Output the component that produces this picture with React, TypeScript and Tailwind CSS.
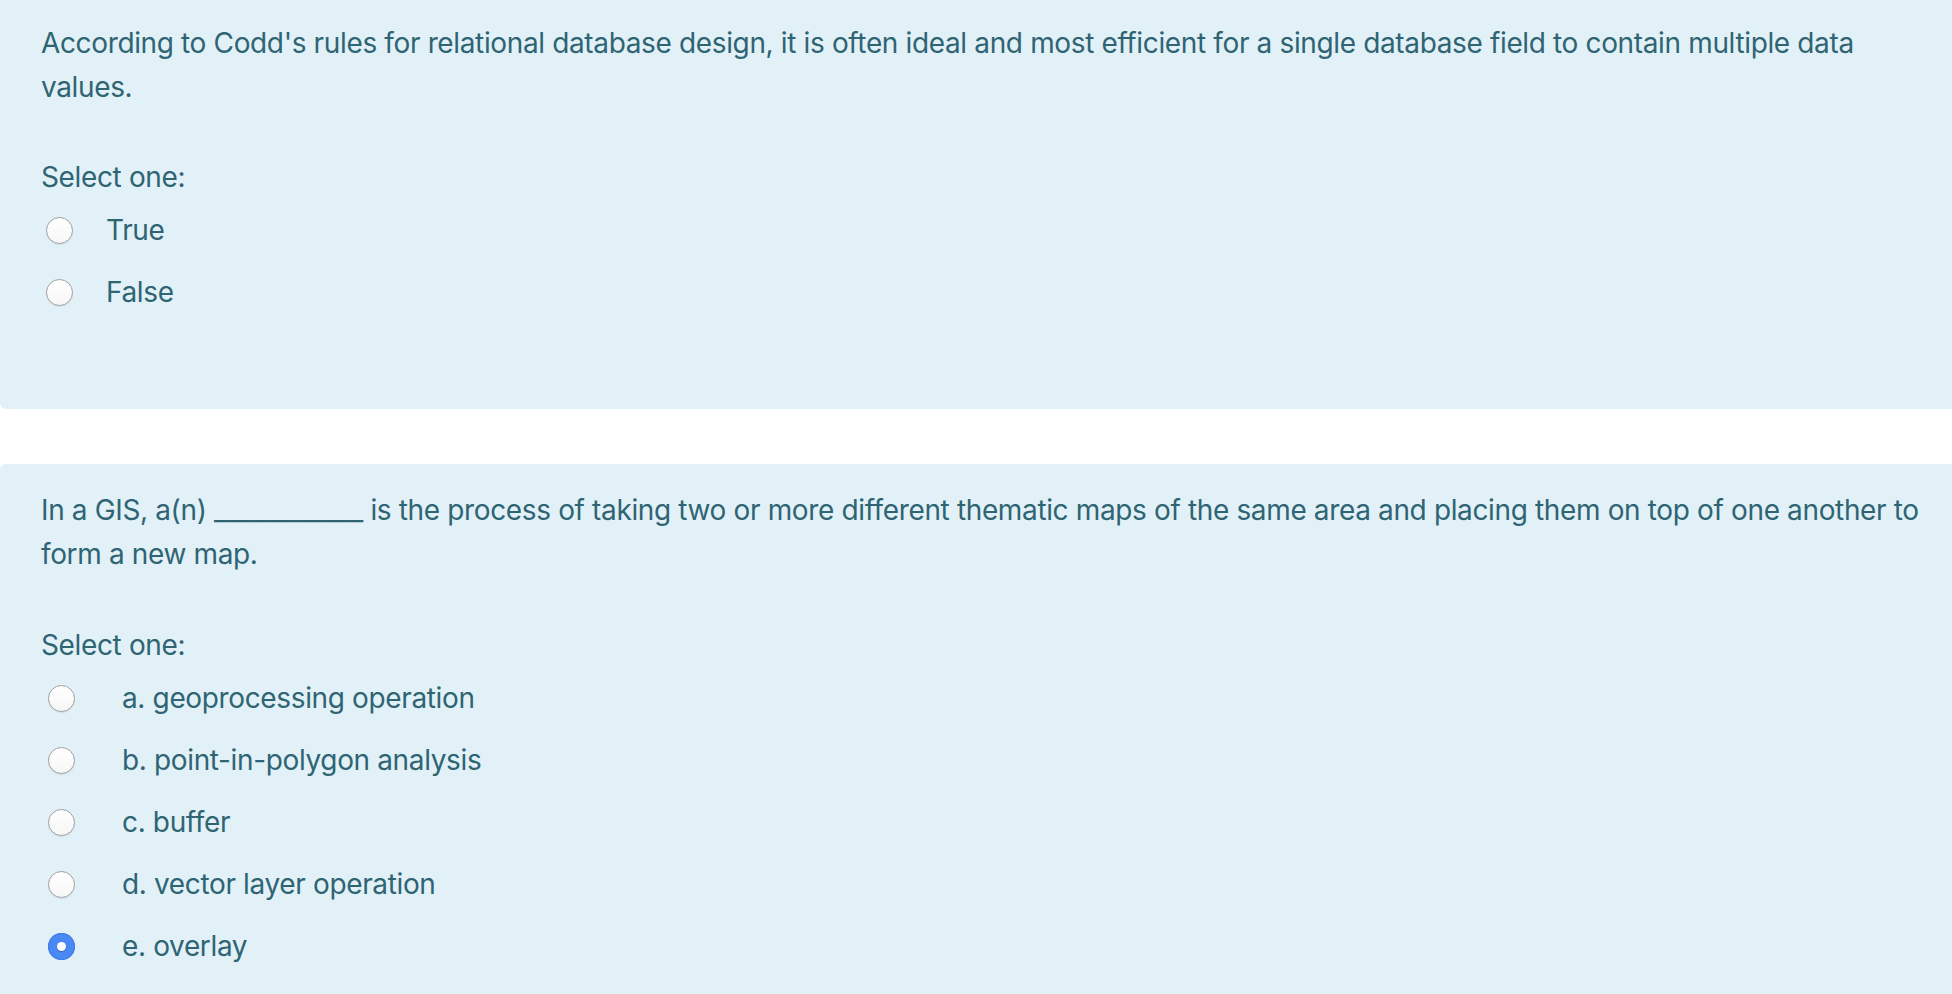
import React from "react";

function Radio({ checked = false }: { checked?: boolean }) {
  if (checked) {
    return (
      <span className="flex h-[27px] w-[27px] shrink-0 items-center justify-center rounded-full bg-[#4a88f5] shadow-[inset_0_0_0_1px_#3f7ce8]">
        <span className="h-[9px] w-[9px] rounded-full bg-white shadow-[0_1px_1px_rgba(0,0,0,0.25)]" />
      </span>
    );
  }
  return (
    <span className="block h-[27px] w-[27px] shrink-0 rounded-full border border-[#a0a0a0] bg-gradient-to-b from-white to-[#f7f7f7] shadow-[0_1px_1px_rgba(0,0,0,0.08)]" />
  );
}

export default function App() {
  const opts2 = [
    "a. geoprocessing operation",
    "b. point-in-polygon analysis",
    "c. buffer",
    "d. vector layer operation",
    "e. overlay",
  ];
  return (
    <div
      className="h-[994px] w-[1952px] overflow-hidden bg-white text-[28px] leading-[44px] tracking-[-0.36px] text-[#2f6473]"
      style={{ fontFamily: 'Inter, "Noto Sans", sans-serif' }}
    >
      <div className="-mt-[3px] flex flex-col gap-[55px]">
        <div className="w-[1970px] rounded-[6px] bg-[#e2f1f8] pl-[41px] pt-[24px] pb-[95px]">
          <p className="w-[1900px]">
            According to Codd's rules for relational database design, it is often ideal and most efficient for a single database field to contain multiple data values.
          </p>
          <p className="mt-[46px]">Select one:</p>
          <div className="mt-[9px] flex flex-col gap-[18px]">
            {["True", "False"].map((t) => (
              <div key={t} className="flex h-[44px] items-center">
                <span className="ml-[5px]">
                  <Radio />
                </span>
                <span className="ml-[33px]">{t}</span>
              </div>
            ))}
          </div>
        </div>
        <div className="w-[1970px] rounded-[6px] bg-[#e2f1f8] pl-[41px] pt-[24px] pb-[40px]">
          <p className="w-[1900px]">
            In a GIS, a(n) ____________ is the process of taking two or more different thematic maps of the same area and placing them on top of one another to form a new map.
          </p>
          <p className="mt-[47px]">Select one:</p>
          <div className="mt-[9px] flex flex-col gap-[18px]">
            {opts2.map((t, i) => (
              <div key={t} className="flex h-[44px] items-center">
                <span className="ml-[7px]">
                  <Radio checked={i === 4} />
                </span>
                <span className="ml-[47px]">{t}</span>
              </div>
            ))}
          </div>
        </div>
      </div>
    </div>
  );
}
